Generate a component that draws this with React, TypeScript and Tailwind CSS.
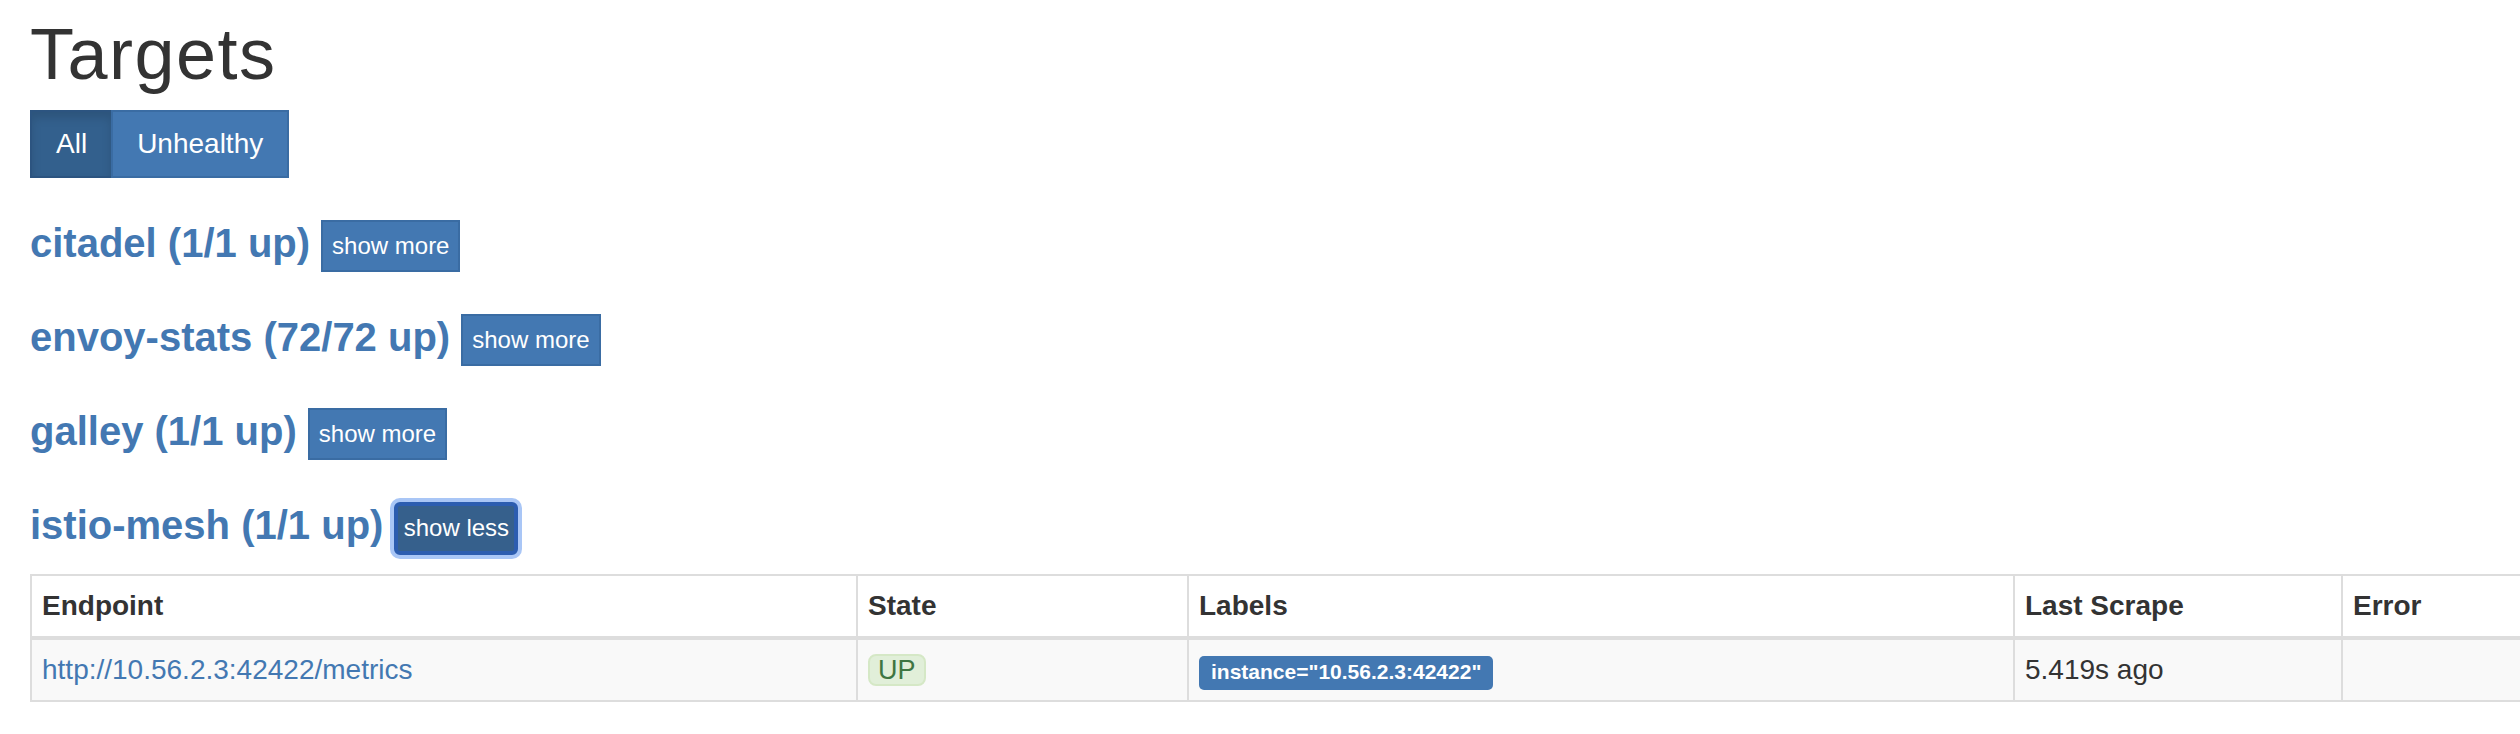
import React from 'react';

type Job = {
    name: string;
    up: number;
    total: number;
    expanded?: boolean;
};

const jobs: Job[] = [
    { name: 'citadel', up: 1, total: 1 },
    { name: 'envoy-stats', up: 72, total: 72 },
    { name: 'galley', up: 1, total: 1 },
    { name: 'istio-mesh', up: 1, total: 1, expanded: true },
];

function JobHeader({ job }: { job: Job }) {
    return (
        <div className="mt-[42px] flex h-[52px] items-center">
            <a
                href={`#job-${job.name}`}
                className="pb-[6px] text-[40px] font-bold leading-[46px] text-[#4378b2]"
            >
                {job.name} ({job.up}/{job.total} up)
            </a>
            {job.expanded ? (
                <button className="ml-[11px] flex h-[53px] w-[124px] items-center justify-center rounded-[6px] border-[4px] border-[#2c5db0] bg-[#36608c] text-[24px] leading-[36px] text-white shadow-[0_0_0_4px_#a9c6f6]">
                    show less
                </button>
            ) : (
                <button className="ml-[11px] flex h-[52px] items-center border-2 border-[#3a6ca3] bg-[#4378b2] px-[9px] text-[24px] leading-[36px] text-white">
                    show more
                </button>
            )}
        </div>
    );
}

function TargetsTable() {
    const th =
        'border-2 border-[#dddddd] border-b-[4px] p-[10px] text-left align-bottom text-[28px] font-bold leading-[40px] text-[#333333]';
    const td =
        'border-2 border-[#dddddd] p-[10px] align-top text-[28px] leading-[40px] text-[#333333]';

    return (
        <div className="mt-[20px] w-[2600px]">
            <table className="w-full table-fixed border-collapse">
                <colgroup>
                    <col className="w-[826px]" />
                    <col className="w-[331px]" />
                    <col className="w-[826px]" />
                    <col className="w-[328px]" />
                    <col />
                </colgroup>
                <thead>
                    <tr className="bg-white">
                        <th className={th}>Endpoint</th>
                        <th className={th}>State</th>
                        <th className={th}>Labels</th>
                        <th className={th}>Last Scrape</th>
                        <th className={th}>Error</th>
                    </tr>
                </thead>
                <tbody>
                    <tr className="bg-[#f9f9f9]">
                        <td className={td}>
                            <a href="#" className="text-[#4378b2]">
                                http://10.56.2.3:42422/metrics
                            </a>
                        </td>
                        <td className={td}>
                            <span className="inline-block rounded-[8px] border-2 border-[#d5e8c6] bg-[#e1efd9] px-[8px] text-[27px] leading-[28px] text-[#3f7642]">
                                UP
                            </span>
                        </td>
                        <td className={td}>
                            <span className="inline-block rounded-[5px] bg-[#4378b2] px-[12px] pb-[8px] pt-[5px] text-[21px] font-bold leading-[21px] text-white">
                                instance="10.56.2.3:42422"
                            </span>
                        </td>
                        <td className={td}>5.419s ago</td>
                        <td className={td}></td>
                    </tr>
                </tbody>
            </table>
        </div>
    );
}

export default function App() {
    return (
        <div className="min-h-screen w-full overflow-hidden bg-white px-[30px] pt-[15px] font-['Liberation_Sans',Arial,sans-serif] text-[#333333]">
            <h1 className="text-[72px] font-normal leading-[79px] tracking-[1.5px] text-[#333333]">
                Targets
            </h1>
            <div className="mt-[16px] flex">
                <button className="h-[68px] border-2 border-[#2c5480] bg-[#33608d] px-[24px] text-[28px] leading-[40px] text-white shadow-[inset_0_6px_10px_rgba(0,0,0,0.125)]">
                    All
                </button>
                <button className="-ml-[2px] h-[68px] border-2 border-[#3a6ca3] bg-[#4378b2] px-[24px] text-[28px] leading-[40px] text-white">
                    Unhealthy
                </button>
            </div>
            {jobs.map((job) => (
                <JobHeader key={job.name} job={job} />
            ))}
            <TargetsTable />
        </div>
    );
}
